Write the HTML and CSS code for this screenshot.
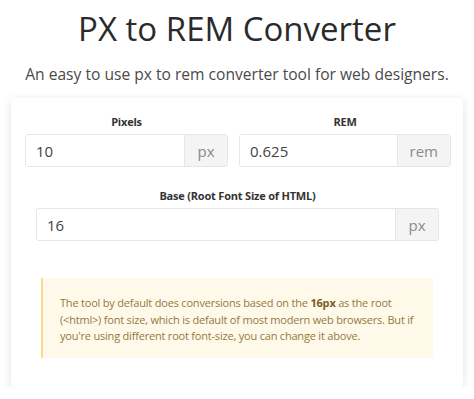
FILE: index.html
```html
<!DOCTYPE html>
<html lang="en">
<head>
  <meta charset="UTF-8" />
  <title>PX to REM Converter</title>
  <meta name="viewport" content="width=device-width, initial-scale=1.0" />
  <link rel="stylesheet" href="styles.css">
</head>
<body>
  <header class="intro">
    <h1>PX to REM Converter</h1>
    <p>An easy to use px to rem converter tool for web designers.</p>
  </header>

  <div class="card">
    <div class="row-pair">
      <div class="field">
        <label for="px-input">Pixels</label>
        <div class="input-group">
          <input type="text" id="px-input" value="10" />
          <span class="addon">px</span>
        </div>
      </div>
      <div class="field">
        <label for="rem-input">REM</label>
        <div class="input-group">
          <input type="text" id="rem-input" value="0.625" />
          <span class="addon">rem</span>
        </div>
      </div>
    </div>

    <div class="field base-field">
      <label for="base-input">Base (Root Font Size of HTML)</label>
      <div class="input-group">
        <input type="text" id="base-input" value="16" />
        <span class="addon">px</span>
      </div>
    </div>

    <!-- Note about default base -->
    <div class="note">
      The tool by default does conversions based on the <strong>16px</strong> as the root
      (&lt;html&gt;) font size, which is default of most modern web browsers. But if
      you're using different root font-size, you can change it above.
    </div>
  </div>
</body>
</html>
```

FILE: styles.css
```css
* {
  margin: 0;
  padding: 0;
  box-sizing: border-box;
  font-family: 'Open Sans', 'Noto Sans', sans-serif;
}

body {
  background-color: #fff;
  color: #333;
  padding: 0 11px;
}

.intro {
  text-align: center;
}

.intro h1 {
  font-size: 33px;
  font-weight: 400;
  line-height: 40px;
  padding-top: 9px;
  color: #2b2b2b;
}

.intro p {
  font-size: 15.6px;
  line-height: 22px;
  margin-top: 14px;
  color: #4a4a4a;
}

.card {
  margin-top: 13px;
  background: white;
  border-radius: 4px;
  box-shadow: 0 2px 10px rgba(0, 0, 0, 0.12);
  padding: 16px 12px 29px 14px;
}

.row-pair {
  display: grid;
  grid-template-columns: 203px minmax(0, 1fr);
  gap: 11px;
}

.field label {
  display: block;
  text-align: center;
  font-size: 11px;
  letter-spacing: -0.2px;
  font-weight: 700;
  line-height: 16px;
  margin-bottom: 4px;
  color: #333;
}

.input-group {
  display: flex;
  height: 33px;
  border: 1px solid #e6e6e6;
  border-radius: 3px;
  overflow: hidden;
}

.input-group input {
  flex: 1;
  width: 0;
  min-width: 0;
  border: none;
  outline: none;
  padding: 0 10px;
  font-size: 15px;
  color: #444;
  background: white;
}

.addon {
  display: flex;
  align-items: center;
  justify-content: center;
  background: #f4f4f4;
  border-left: 1px solid #e6e6e6;
  color: #8a8a8a;
  font-size: 15px;
  padding: 0 12px;
  min-width: 43px;
}

.base-field {
  margin: 21px 12px 0 11px;
}

.note {
  margin: 37px 18px 0 16px;
  background: #fff9ea;
  border-left: 2px solid #fbdc8a;
  padding: 17px 10px 13px 17px;
  font-size: 11px;
  letter-spacing: -0.2px;
  line-height: 16.5px;
  color: #937a3e;
}

.note strong {
  color: #7a5c1e;
}
```
